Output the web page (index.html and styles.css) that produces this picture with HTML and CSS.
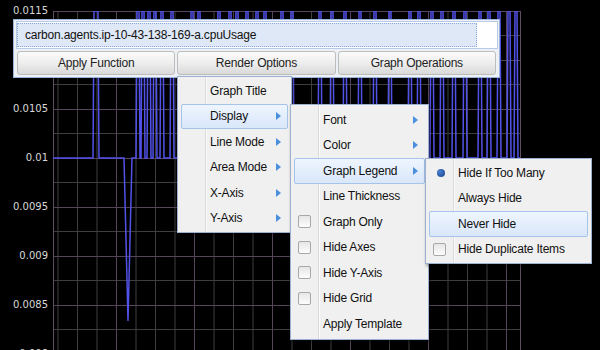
FILE: index.html
```html
<!DOCTYPE html>
<html lang="en">

<head>
    <meta charset="UTF-8">
    <title>Graph Composer</title>
    <link rel="stylesheet" href="styles.css">
</head>

<body>
    <div class="screen">
        <svg class="graph" width="600" height="350" viewBox="0 0 600 350">
            <defs>
                <clipPath id="plot">
                    <rect x="53" y="11" width="468" height="345"></rect>
                </clipPath>
            </defs>
            <path class="grid-minor" d="M53 35.5H521M53 84.5H521M53 133.5H521M53 182.5H521M53 231.5H521M53 280.5H521M53 329.5H521
                M58 11V350M77.5 11V350M97 11V350M136 11V350M155.5 11V350M175 11V350M214 11V350M233.5 11V350M253 11V350
                M292 11V350M311.5 11V350M331 11V350M370 11V350M389.5 11V350M409 11V350M448 11V350M467.5 11V350M487 11V350"></path>
            <path class="grid-major" d="M53 11.5H521M53 60.5H521M53 109.5H521M53 158.5H521M53 207.5H521M53 256.5H521M53 305.5H521
                M116.5 11V350M194.5 11V350M272.5 11V350M350.5 11V350M428.5 11V350M506.5 11V350"></path>
            <path class="axis" d="M53.5 11V350M520.5 11V350"></path>
            <g class="labels">
                <text x="48" y="14">0.0115</text>
                <text x="48" y="63">0.011</text>
                <text x="48" y="112">0.0105</text>
                <text x="48" y="161">0.01</text>
                <text x="48" y="210">0.0095</text>
                <text x="48" y="259">0.009</text>
                <text x="48" y="308">0.0085</text>
                <text x="48" y="357">0.008</text>
            </g>
            <path class="series" clip-path="url(#plot)" d="M53,158 H93 L94,11 L98,11 L99,158 H124 L128,321 L132,158 H136
                L137,11 L139,11 L140,158 H141 L142,11 L144,11 L145,158 H147 L148,11 L150,11 L151,158 H153 L154,11 L156,11 L157,158
                H160 L161,11 L163,11 L164,158 H170 L171,11 L173,11 L174,158 H190 L191,11 L193,11 L194,158 H197 L198,11 L200,11 L201,158
                H217 L218,11 L220,11 L221,158 H228 L229,11 L231,11 L232,158 H235 L236,11 L238,11 L239,158 H245 L246,11 L248,11 L249,158
                H255 L256,11 L258,11 L259,158 H263 L264,11 L266,11 L267,158 H280 L281,11 L283,11 L284,158 H290 L291,11 L293,11 L294,158
                H318 L319,11 L321,11 L322,158 H330 L331,11 L333,11 L334,158 H343 L344,11 L346,11 L347,158 H358 L359,11 L361,11 L362,158
                H373 L374,11 L376,11 L377,158 H388 L389,11 L391,11 L392,158 H408 L409,11 L411,11 L412,158 H417 L418,11 L420,11 L421,158
                H430 L431,11 L433,11 L434,158 H440 L441,11 L443,11 L444,158 H452 L453,11 L455,11 L456,158 H463 L464,11 L466,11 L467,158
                H478 L479,11 L481,11 L482,158 H487 L488,11 L490,11 L491,158 H497 L498,11 L500,11 L501,158 H507 L508,11 L510,11 L511,158
                H514 L515,11 L517,11 L518,158 H520"></path>
        </svg>

        <div class="toolbar">
            <div class="target-row">
                <div class="target">carbon.agents.ip-10-43-138-169-a.cpuUsage</div>
            </div>
            <div class="buttons">
                <button class="btn">Apply Function</button>
                <button class="btn">Render Options</button>
                <button class="btn">Graph Operations</button>
            </div>
        </div>

        <ul class="menu menu-main">
            <li class="item"><span class="slot"></span><span class="label">Graph Title</span></li>
            <li class="item active"><span class="slot"></span><span class="label">Display</span><span class="arrow"></span></li>
            <li class="item"><span class="slot"></span><span class="label">Line Mode</span><span class="arrow"></span></li>
            <li class="item"><span class="slot"></span><span class="label">Area Mode</span><span class="arrow"></span></li>
            <li class="item"><span class="slot"></span><span class="label">X-Axis</span><span class="arrow"></span></li>
            <li class="item"><span class="slot"></span><span class="label">Y-Axis</span><span class="arrow"></span></li>
        </ul>

        <ul class="menu menu-display">
            <li class="item"><span class="slot"></span><span class="label">Font</span><span class="arrow"></span></li>
            <li class="item"><span class="slot"></span><span class="label">Color</span><span class="arrow"></span></li>
            <li class="item active"><span class="slot"></span><span class="label">Graph Legend</span><span class="arrow"></span></li>
            <li class="item"><span class="slot"></span><span class="label">Line Thickness</span></li>
            <li class="item"><span class="slot"><span class="check"></span></span><span class="label">Graph Only</span></li>
            <li class="item"><span class="slot"><span class="check"></span></span><span class="label">Hide Axes</span></li>
            <li class="item"><span class="slot"><span class="check"></span></span><span class="label">Hide Y-Axis</span></li>
            <li class="item"><span class="slot"><span class="check"></span></span><span class="label">Hide Grid</span></li>
            <li class="item"><span class="slot"></span><span class="label">Apply Template</span></li>
        </ul>

        <ul class="menu menu-legend">
            <li class="item"><span class="slot"><span class="radio"></span></span><span class="label">Hide If Too Many</span></li>
            <li class="item"><span class="slot"></span><span class="label">Always Hide</span></li>
            <li class="item active"><span class="slot"></span><span class="label">Never Hide</span></li>
            <li class="item"><span class="slot"><span class="check"></span></span><span class="label">Hide Duplicate Items</span></li>
        </ul>
    </div>
</body>

</html>
```

FILE: styles.css
```css
body {
    margin: 0;
    background-color: #000;
    font-family: "Liberation Sans", Arial, sans-serif;
}

.screen {
    position: relative;
    width: 600px;
    height: 350px;
    overflow: hidden;
    background-color: #000;
}

.graph {
    display: block;
}

.grid-minor {
    stroke: #3e3e3e;
    stroke-width: 1;
    fill: none;
}

.grid-major {
    stroke: #56455a;
    stroke-width: 1;
    fill: none;
}

.axis {
    stroke: #5e4c60;
    stroke-width: 1;
    fill: none;
}

.labels text {
    font-family: "DejaVu Sans", sans-serif;
    font-size: 10px;
    fill: #d8d8d8;
    text-anchor: end;
}

.series {
    fill: none;
    stroke: #5252ea;
    stroke-width: 1.5;
}

/* query bar */

.toolbar {
    position: absolute;
    left: 13px;
    top: 19px;
    width: 487px;
    box-sizing: border-box;
    border: 1px solid #9ab3da;
    background-color: #edf0f5;
    padding: 1px 1px 2px 2px;
}

.target-row {
    height: 28px;
    box-sizing: border-box;
    background-color: #fff;
    border: 1px solid #b7cbe8;
    padding-top: 1px;
}

.target {
    width: 460px;
    height: 24px;
    box-sizing: border-box;
    background-color: #dfe8f7;
    border: 1px dotted #86a9dd;
    padding-left: 7px;
    line-height: 22px;
    font-size: 12px;
    letter-spacing: -0.2px;
    color: #111;
}

.buttons {
    display: flex;
    gap: 2px;
    margin-top: 2px;
    padding: 0 2px 0 1px;
}

.btn {
    flex: 1;
    height: 24px;
    padding: 0;
    border: 1px solid #bdbdbd;
    border-radius: 3px;
    background: linear-gradient(#fbfbfb, #ececec 55%, #d9d9d9);
    font-family: "Liberation Sans", Arial, sans-serif;
    font-size: 12px;
    letter-spacing: -0.2px;
    color: #222;
}

/* menus */

.menu {
    position: absolute;
    margin: 0;
    padding: 1px 0;
    list-style: none;
    box-sizing: border-box;
    border: 1px solid #9cb0cf;
    background: linear-gradient(to right, transparent 27px, #dadada 27px, #dadada 28px, #fbfbfb 28px, #fbfbfb 29px, transparent 29px), #f0f0f0;
    box-shadow: 1px 2px 3px rgba(0, 0, 0, 0.35);
}

.menu-main {
    left: 177px;
    top: 76px;
    width: 115px;
}

.menu-display {
    left: 290px;
    top: 104px;
    width: 139px;
    padding: 2px 0;
}

.menu-legend {
    left: 425px;
    top: 158px;
    width: 167px;
}

.item {
    display: flex;
    align-items: center;
    height: 25.5px;
    margin: 0 3px;
    padding-left: 3px;
    box-sizing: border-box;
    border: 1px solid transparent;
    border-radius: 2px;
    font-size: 12px;
    letter-spacing: -0.2px;
    color: #111;
    white-space: nowrap;
}

.item.active {
    background: linear-gradient(#eef5fe, #d9e7fa);
    border-color: #a6c3ea;
}

.slot {
    flex: none;
    width: 25px;
    display: flex;
    align-items: center;
}

.arrow {
    margin-left: auto;
    margin-right: 6px;
    border-left: 5px solid #4b8fdc;
    border-top: 4px solid transparent;
    border-bottom: 4px solid transparent;
}

.check {
    width: 13px;
    height: 13px;
    box-sizing: border-box;
    border: 1px solid #a8a8a8;
    border-radius: 2px;
    background: linear-gradient(#e6e6e6, #fdfdfd);
}

.radio {
    width: 8px;
    height: 8px;
    margin-left: 4px;
    border-radius: 50%;
    background: radial-gradient(circle at 35% 35%, #4a80d0, #123f8c);
}
```
